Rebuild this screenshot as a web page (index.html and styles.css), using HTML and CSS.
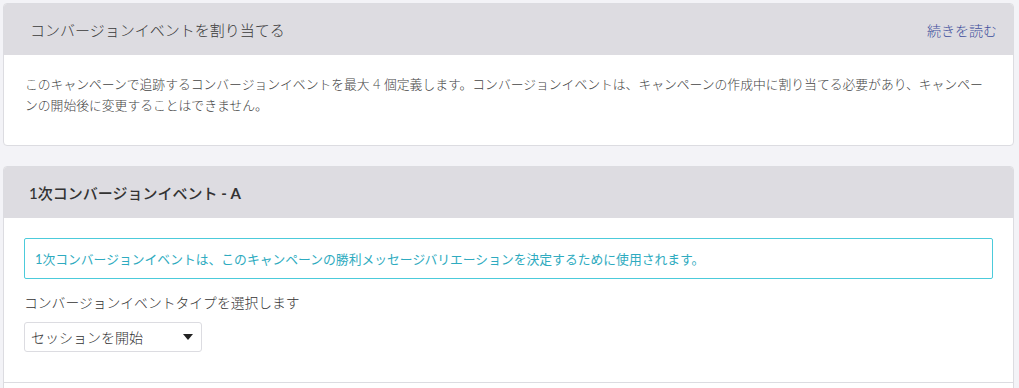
FILE: index.html
```html
<!DOCTYPE html>
<html lang="ja">
<head>
<meta charset="utf-8">
<link rel="stylesheet" href="styles.css">
</head>
<body>
<div class="page">
  <section class="card">
    <header class="card-head">
      <h2 class="card-title">コンバージョンイベントを割り当てる</h2>
      <a class="more" href="#">続きを読む</a>
    </header>
    <div class="card-body intro">
      <p>このキャンペーンで追跡するコンバージョンイベントを最大 4 個定義します。コンバージョンイベントは、キャンペーンの作成中に割り当てる必要があり、キャンペーンの開始後に変更することはできません。</p>
    </div>
  </section>

  <section class="card">
    <header class="card-head">
      <h2 class="card-title strong">1次コンバージョンイベント <b>- A</b></h2>
    </header>
    <div class="card-body event">
      <div class="info">1次コンバージョンイベントは、このキャンペーンの勝利メッセージバリエーションを決定するために使用されます。</div>
      <label class="field-label">コンバージョンイベントタイプを選択します</label>
      <div class="select">
        <span>セッションを開始</span>
        <span class="caret"></span>
      </div>
    </div>
    <div class="card-body next"></div>
  </section>
</div>
</body>
</html>
```
FILE: styles.css
```css
html, body {
  margin: 0;
  padding: 0;
  background: #f3f3f7;
}
body {
  font-family: Lato, "Noto Sans CJK JP", sans-serif;
  font-weight: 400;
  color: #555;
}
.page {
  padding: 3px 5px 0 3px;
  display: flex;
  flex-direction: column;
  gap: 20px;
}
.card {
  background: #fff;
  border: 1px solid #dcdce1;
  border-radius: 4px;
  overflow: hidden;
}
.card-head {
  height: 51px;
  background: #dddce1;
  display: flex;
  align-items: center;
  justify-content: space-between;
  padding: 0 16px 0 26px;
}
.card-title {
  margin: 0;
  font-size: 15px;
  font-weight: 300;
  color: #3a3a3a;
}
.card-title.strong {
  font-weight: 500;
  color: #333;
  margin-left: -1px;
}
.card-title b {
  font-weight: 700;
}
.more {
  font-size: 14px;
  font-weight: 300;
  color: #3e4f9c;
  text-decoration: none;
}
.card-body {
  padding: 0 20px;
}
.intro {
  padding: 19px 24px 29px 21px;
}
.intro p {
  margin: 0;
  font-size: 12.8px;
  font-weight: 300;
  line-height: 21px;
  color: #444;
}
.event {
  padding: 20px 20px 30px 20px;
  display: flex;
  flex-direction: column;
  align-items: flex-start;
  border-bottom: 1px solid #dcdce1;
}
.info {
  align-self: stretch;
  border: 1px solid #4ccbdb;
  border-radius: 2px;
  height: 39px;
  display: flex;
  align-items: center;
  padding: 0 10px;
  font-size: 12.8px;
  color: #2eabc0;
}
.field-label {
  margin-top: 14px;
  font-size: 13.8px;
  font-weight: 300;
  line-height: 20px;
  color: #333;
}
.select {
  margin-top: 9px;
  height: 28px;
  border: 1px solid #dcdce1;
  border-radius: 3px;
  display: flex;
  align-items: center;
  justify-content: space-between;
  padding: 0 8px 0 6px;
  box-sizing: content-box;
  width: 162px;
  font-size: 14px;
  font-weight: 300;
  color: #333;
}
.caret {
  width: 0;
  height: 0;
  border-left: 5.5px solid transparent;
  border-right: 5.5px solid transparent;
  border-top: 6px solid #222;
}
.next {
  height: 40px;
}
```
